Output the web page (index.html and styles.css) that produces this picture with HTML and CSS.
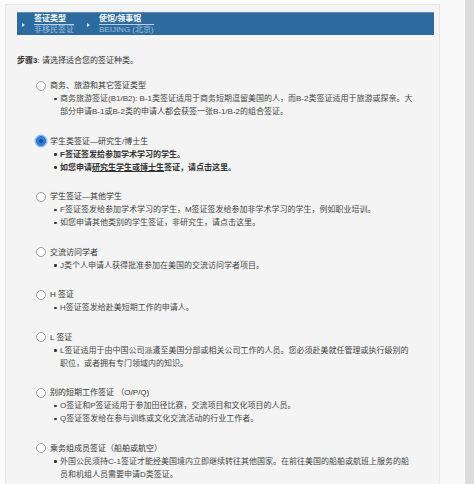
FILE: index.html
```html
<!DOCTYPE html>
<html lang="zh-CN">
<head>
<meta charset="utf-8">
<title>签证种类</title>
<link rel="stylesheet" href="styles.css">
</head>
<body>
<div class="page">
  <div class="panel">
    <div class="steps-bar">
      <div class="crumb">
        <span class="arrow"></span>
        <div class="crumb-text">
          <div class="crumb-title">签证类型</div>
          <div class="crumb-sub">非移民签证</div>
        </div>
      </div>
      <div class="crumb">
        <span class="arrow"></span>
        <div class="crumb-text">
          <div class="crumb-title">使馆/领事馆</div>
          <div class="crumb-sub">BEIJING (北京)</div>
        </div>
      </div>
    </div>

    <p class="step-prompt"><b>步骤3</b>: 请选择适合您的签证种类。</p>

    <div class="options">
      <div class="option">
        <div class="option-head"><span class="radio"></span><span>商务、旅游和其它签证类型</span></div>
        <ul class="details">
          <li>商务旅游签证(B1/B2): B-1类签证适用于商务短期逗留美国的人，而B-2类签证适用于旅游或探亲。大部分申请B-1或B-2类的申请人都会获签一张B-1/B-2的组合签证。</li>
        </ul>
      </div>
      <div class="option">
        <div class="option-head"><span class="radio checked"></span><span>学生类签证—研究生/博士生</span></div>
        <ul class="details strong">
          <li>F签证签发给参加学术学习的学生。</li>
          <li>如您申请<u>研究生学生或博士生</u>签证，请点击这里。</li>
        </ul>
      </div>
      <div class="option">
        <div class="option-head"><span class="radio"></span><span>学生签证—其他学生</span></div>
        <ul class="details">
          <li>F签证签发给参加学术学习的学生，M签证签发给参加非学术学习的学生，例如职业培训。</li>
          <li>如您申请其他类别的学生签证，非研究生，请点击这里。</li>
        </ul>
      </div>
      <div class="option">
        <div class="option-head"><span class="radio"></span><span>交流访问学者</span></div>
        <ul class="details">
          <li>J类个人申请人获得批准参加在美国的交流访问学者项目。</li>
        </ul>
      </div>
      <div class="option">
        <div class="option-head"><span class="radio"></span><span>H 签证</span></div>
        <ul class="details">
          <li>H签证签发给赴美短期工作的申请人。</li>
        </ul>
      </div>
      <div class="option">
        <div class="option-head"><span class="radio"></span><span>L 签证</span></div>
        <ul class="details">
          <li>L签证适用于由中国公司派遣至美国分部或相关公司工作的人员。您必须赴美就任管理或执行级别的职位，或者拥有专门领域内的知识。</li>
        </ul>
      </div>
      <div class="option">
        <div class="option-head"><span class="radio"></span><span>别的短期工作签证 （O/P/Q)</span></div>
        <ul class="details">
          <li>O签证和P签证适用于参加田径比赛，交流项目和文化项目的人员。</li>
          <li>Q签证签发给在参与训练或文化交流活动的行业工作者。</li>
        </ul>
      </div>
      <div class="option">
        <div class="option-head"><span class="radio"></span><span>乘务组成员签证（船舶或航空）</span></div>
        <ul class="details">
          <li>外国公民须持C-1签证才能经美国境内立即继续转往其他国家。在前往美国的船舶或航班上服务的船员和机组人员需要申请D类签证。</li>
        </ul>
      </div>
    </div>
  </div>
  <div class="gutter"></div>
  <div class="scroll-strip"></div>
</div>
</body>
</html>
```

FILE: styles.css
```css
html, body {
  margin: 0;
  padding: 0;
}

body {
  background: #fbfbfb;
  font-family: "Liberation Sans", "Noto Sans CJK SC", sans-serif;
  font-size: 8px;
  line-height: 13px;
  color: #333;
}

.page {
  display: flex;
  height: 484px;
  overflow: hidden;
}

.panel {
  box-sizing: border-box;
  width: 435px;
  margin: 4px 0 0 5px;
  padding: 7px 5px 0 11px;
  background: #f4f4f4;
  border: 1px solid #e6e6e6;
  border-bottom: none;
}

.gutter {
  flex: 1;
  background: #f9f9f9;
}

.scroll-strip {
  width: 9px;
  background: #dcdcdc;
}

/* blue breadcrumb bar */
.steps-bar {
  display: flex;
  height: 23px;
  background: #2d6a9d;
  border-top: 1px solid #5d8db8;
  box-sizing: border-box;
  padding-left: 5px;
  gap: 13px;
}

.crumb {
  display: flex;
  align-items: center;
  gap: 9px;
}

.arrow {
  width: 0;
  height: 0;
  border-top: 2.5px solid transparent;
  border-bottom: 2.5px solid transparent;
  border-left: 3px solid #dfe9f3;
  margin-top: 1px;
}

.crumb-text {
  display: flex;
  flex-direction: column;
  line-height: 10px;
}

.crumb-title {
  color: #fff;
  font-weight: bold;
  border-bottom: 1px solid #b9d0e6;
  padding-right: 8px;
}

.crumb-sub {
  color: #9fc0de;
}

.step-prompt {
  margin: 19px 0 0;
  color: #333;
}

.options {
  margin: 12px 0 0 19px;
}

.option {
  margin-bottom: 16.5px;
}

.option-head {
  display: flex;
  align-items: center;
  gap: 4px;
}

.radio {
  box-sizing: border-box;
  width: 10px;
  height: 10px;
  border-radius: 50%;
  background: #fff;
  border: 1px solid #9a9a9a;
}

.radio.checked {
  background: #2f7fdc;
  border-color: #2a6fc4;
  box-shadow: 0 0 0 1.5px #8fbbef;
  display: flex;
  align-items: center;
  justify-content: center;
}

.radio.checked::after {
  content: "";
  width: 3.5px;
  height: 3.5px;
  border-radius: 50%;
  background: #1b4f96;
}

.details {
  list-style: none;
  margin: 0 19px 0 24px;
  padding: 0;
  color: #444;
}

.details li {
  position: relative;
}

.details li::before {
  content: "";
  position: absolute;
  left: -6px;
  top: 5.5px;
  width: 2.5px;
  height: 2.5px;
  border-radius: 50%;
  background: #333;
}

.details.strong {
  font-weight: bold;
  color: #333;
}
```
